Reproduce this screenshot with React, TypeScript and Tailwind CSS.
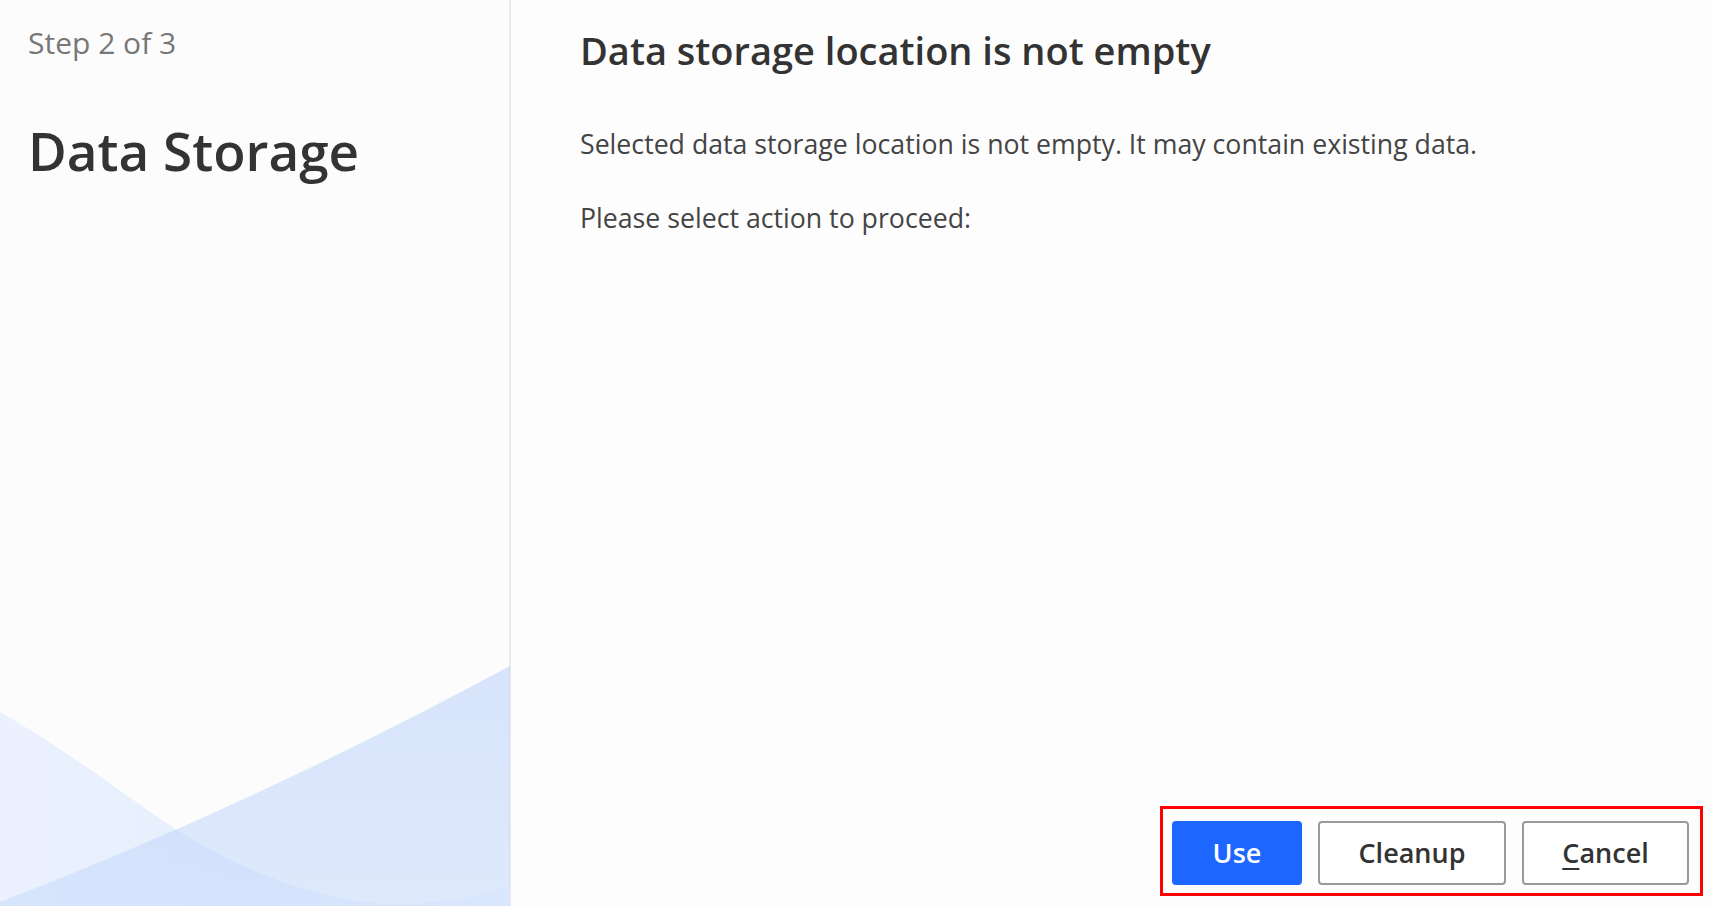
const font = { fontFamily: '"Open Sans", "Noto Sans", sans-serif' };

function Waves() {
  return (
    <svg viewBox="0 0 510 240" className="block h-[240px] w-[510px]" preserveAspectRatio="none">
      <defs>
        <linearGradient id="waveB" x1="0" y1="0" x2="1" y2="0">
          <stop offset="0" stopColor="#ebf1fe" />
          <stop offset="0.5" stopColor="#e6eefd" />
          <stop offset="1" stopColor="#f3f7fe" />
        </linearGradient>
        <linearGradient id="waveA" x1="0" y1="0" x2="0" y2="1">
          <stop offset="0" stopColor="#b9d0fa" />
          <stop offset="1" stopColor="#c6d9fb" />
        </linearGradient>
      </defs>
      <path
        d="M0,46 C90,98 150,150 200,178 S330,240 400,238 S480,228 510,220 L510,240 L0,240 Z"
        fill="url(#waveB)"
      />
      <path d="M0,236 Q250,140 510,0 L510,240 L0,240 Z" fill="url(#waveA)" fillOpacity="0.55" />
    </svg>
  );
}

export default function App() {
  return (
    <div className="flex h-[906px] w-full overflow-hidden bg-[#fdfdfd]" style={font}>
      {/* left: wizard step */}
      <div className="flex w-[511px] shrink-0 flex-col border-r-2 border-[#ebebeb] bg-[#fcfcfc]">
        <div className="px-[28px] pt-[23px]">
          <div className="text-[30px] leading-[40px] text-[#777777]">Step 2 of 3</div>
          <div className="mt-[58px] text-[53px] font-semibold leading-[60px] text-[#333333]">
            Data Storage
          </div>
        </div>
        <div className="mt-auto">
          <Waves />
        </div>
      </div>

      {/* right: content */}
      <div className="flex flex-1 flex-col pl-[69px] pr-[10px]">
        <h1 className="pt-[24px] text-[38px] font-semibold leading-[52px] text-[#333333]">
          Data storage location is not empty
        </h1>
        <p className="mt-[50px] text-[26.7px] leading-[36px] text-[#444444]">
          Selected data storage location is not empty. It may contain existing data.
        </p>
        <p className="mt-[38px] text-[26.7px] leading-[36px] text-[#444444]">
          Please select action to proceed:
        </p>

        <div className="mt-auto mb-[10px] flex justify-end">
          <div className="flex gap-[16px] border-[3px] border-[#ff0000] pt-[12px] pb-[8px] pl-[9px] pr-[11px]">
            <button className="h-[64px] w-[130px] rounded-[4px] bg-[#1d66ff] text-[27px] font-semibold text-white">
              Use
            </button>
            <button className="h-[64px] w-[188px] rounded-[4px] border-2 border-[#9a9a9a] bg-white text-[27px] font-semibold text-[#333333]">
              Cleanup
            </button>
            <button className="h-[64px] w-[167px] rounded-[4px] border-2 border-[#9a9a9a] bg-white text-[27px] font-semibold text-[#333333]">
              <span className="underline decoration-2 underline-offset-[5px]">C</span>ancel
            </button>
          </div>
        </div>
      </div>
    </div>
  );
}
